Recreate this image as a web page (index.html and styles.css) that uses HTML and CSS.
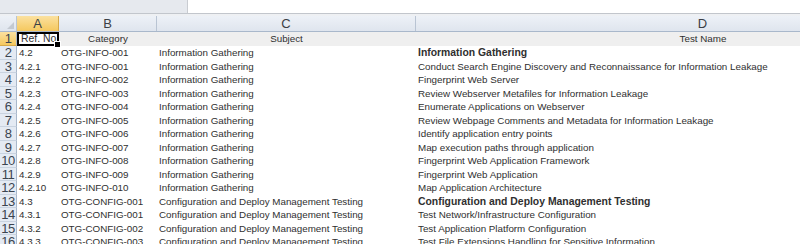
FILE: index.html
```html
<!DOCTYPE html>
<html>
<head>
<meta charset="utf-8">
<link rel="stylesheet" href="styles.css">
</head>
<body>
<div class="sheet">
  <div class="topbar">
    <div class="namebox"></div>
    <div class="formula"></div>
  </div>
  <div class="gap"></div>
  <div class="colheads">
    <div class="corner"><span class="tri"></span></div>
    <div class="ch cA sel">A</div>
    <div class="ch cB">B</div>
    <div class="ch cC">C</div>
    <div class="ch cD">D</div>
  </div>
  <div class="row hdr">
    <div class="rh sel">1</div>
    <div class="c cA active">Ref. No.<span class="handle"></span></div>
    <div class="c cB ctr">Category</div>
    <div class="c cC ctr">Subject</div>
    <div class="c cD ctr">Test Name</div>
  </div>
  <div class="row"><div class="rh">2</div><div class="c cA">4.2</div><div class="c cB">OTG-INFO-001</div><div class="c cC">Information Gathering</div><div class="c cD b">Information Gathering</div></div>
  <div class="row"><div class="rh">3</div><div class="c cA">4.2.1</div><div class="c cB">OTG-INFO-001</div><div class="c cC">Information Gathering</div><div class="c cD">Conduct Search Engine Discovery and Reconnaissance for Information Leakage</div></div>
  <div class="row"><div class="rh">4</div><div class="c cA">4.2.2</div><div class="c cB">OTG-INFO-002</div><div class="c cC">Information Gathering</div><div class="c cD">Fingerprint Web Server</div></div>
  <div class="row"><div class="rh">5</div><div class="c cA">4.2.3</div><div class="c cB">OTG-INFO-003</div><div class="c cC">Information Gathering</div><div class="c cD">Review Webserver Metafiles for Information Leakage</div></div>
  <div class="row"><div class="rh">6</div><div class="c cA">4.2.4</div><div class="c cB">OTG-INFO-004</div><div class="c cC">Information Gathering</div><div class="c cD">Enumerate Applications on Webserver</div></div>
  <div class="row"><div class="rh">7</div><div class="c cA">4.2.5</div><div class="c cB">OTG-INFO-005</div><div class="c cC">Information Gathering</div><div class="c cD">Review Webpage Comments and Metadata for Information Leakage</div></div>
  <div class="row"><div class="rh">8</div><div class="c cA">4.2.6</div><div class="c cB">OTG-INFO-006</div><div class="c cC">Information Gathering</div><div class="c cD">Identify application entry points</div></div>
  <div class="row"><div class="rh">9</div><div class="c cA">4.2.7</div><div class="c cB">OTG-INFO-007</div><div class="c cC">Information Gathering</div><div class="c cD">Map execution paths through application</div></div>
  <div class="row"><div class="rh">10</div><div class="c cA">4.2.8</div><div class="c cB">OTG-INFO-008</div><div class="c cC">Information Gathering</div><div class="c cD">Fingerprint Web Application Framework</div></div>
  <div class="row"><div class="rh">11</div><div class="c cA">4.2.9</div><div class="c cB">OTG-INFO-009</div><div class="c cC">Information Gathering</div><div class="c cD">Fingerprint Web Application</div></div>
  <div class="row"><div class="rh">12</div><div class="c cA">4.2.10</div><div class="c cB">OTG-INFO-010</div><div class="c cC">Information Gathering</div><div class="c cD">Map Application Architecture</div></div>
  <div class="row"><div class="rh">13</div><div class="c cA">4.3</div><div class="c cB">OTG-CONFIG-001</div><div class="c cC">Configuration and Deploy Management Testing</div><div class="c cD b">Configuration and Deploy Management Testing</div></div>
  <div class="row"><div class="rh">14</div><div class="c cA">4.3.1</div><div class="c cB">OTG-CONFIG-001</div><div class="c cC">Configuration and Deploy Management Testing</div><div class="c cD">Test Network/Infrastructure Configuration</div></div>
  <div class="row"><div class="rh">15</div><div class="c cA">4.3.2</div><div class="c cB">OTG-CONFIG-002</div><div class="c cC">Configuration and Deploy Management Testing</div><div class="c cD">Test Application Platform Configuration</div></div>
  <div class="row"><div class="rh">16</div><div class="c cA">4.3.3</div><div class="c cB">OTG-CONFIG-003</div><div class="c cC">Configuration and Deploy Management Testing</div><div class="c cD">Test File Extensions Handling for Sensitive Information</div></div>
</div>
</body>
</html>
```
FILE: styles.css
```css
html, body {
  margin: 0;
  padding: 0;
  background: #ffffff;
  overflow: hidden;
}
.sheet {
  width: 800px;
  height: 244px;
  overflow: hidden;
  font-family: "Liberation Sans", Arial, sans-serif;
  color: #2f2f2f;
}
.topbar {
  display: flex;
  height: 13px;
}
.namebox {
  width: 187px;
  background: #e6e9ee;
}
.formula {
  flex: 1;
  background: #ffffff;
  border-left: 1px solid #c9ccd1;
}
.gap {
  height: 3px;
  background: #eef0f3;
  border-top: 1px solid #c2c6cc;
  box-sizing: border-box;
}
.colheads {
  display: flex;
  height: 16px;
  background: linear-gradient(#edf1f7, #dfe5ee);
  border-bottom: 1px solid #a9b8cb;
  box-sizing: border-box;
}
.corner {
  width: 17px;
  flex: none;
  position: relative;
  border-right: 1px solid #b9c4d3;
  box-sizing: border-box;
}
.tri {
  position: absolute;
  right: 2px;
  bottom: 2px;
  width: 0;
  height: 0;
  border-left: 7px solid transparent;
  border-bottom: 7px solid #c3c9d1;
}
.ch {
  flex: none;
  box-sizing: border-box;
  border-right: 1px solid #b9c4d3;
  text-align: center;
  font-size: 13px;
  line-height: 15px;
  color: #3b3f45;
}
.ch.sel {
  background: linear-gradient(#fbe1a0, #f5c85e);
  border-right-color: #d6a94a;
}
.cA { width: 42px; flex: none; }
.cB { width: 98px; flex: none; }
.cC { width: 259px; flex: none; }
.cD { width: 574px; flex: none; }
.row {
  display: flex;
  height: 13.5px;
}
.row.hdr {
  height: 14px;
  background: #efefef;
}
.rh {
  width: 17px;
  flex: none;
  box-sizing: border-box;
  background: #e4eaf3;
  border-right: 1px solid #a9b8cb;
  border-bottom: 1px solid #c9d3e0;
  font-size: 13px;
  line-height: 13px;
  text-align: center;
  color: #3b4450;
  overflow: hidden;
  letter-spacing: -0.5px;
}
.rh.sel {
  background: linear-gradient(#fbe1a0, #f5c85e);
  border-bottom-color: #d6a94a;
}
.c {
  box-sizing: border-box;
  padding-left: 2px;
  font-size: 9.8px;
  line-height: 13.5px;
  white-space: nowrap;
  overflow: hidden;
}
.c.ctr {
  text-align: center;
  padding-left: 0;
}
.c.b {
  font-weight: bold;
  font-size: 10.4px;
}
.c.active {
  position: relative;
  background: #ffffff;
  border: 2px solid #000000;
  font-size: 10.4px;
  line-height: 10px;
  padding-left: 2px;
  overflow: visible;
}
.handle {
  position: absolute;
  right: -4px;
  bottom: -4px;
  width: 5px;
  height: 5px;
  background: #000000;
  border: 1px solid #ffffff;
}
```
